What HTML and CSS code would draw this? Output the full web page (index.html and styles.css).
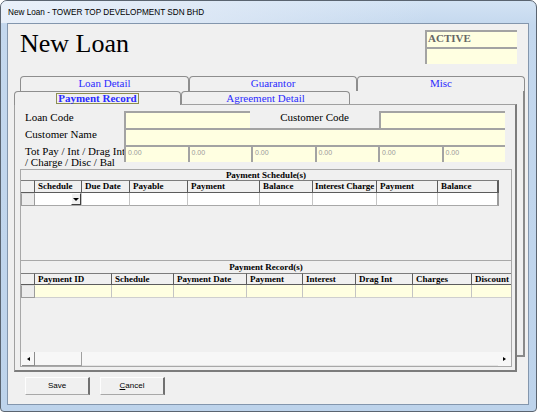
FILE: index.html
```html
<!DOCTYPE html>
<html>
<head>
<meta charset="utf-8">
<title>New Loan</title>
<link rel="stylesheet" href="styles.css">
</head>
<body>
<div class="window">
  <div class="titlebar">New Loan - TOWER TOP DEVELOPMENT SDN BHD</div>
  <div class="client">
    <div class="header">
      <h1 class="heading">New Loan</h1>
      <div class="status">
        <div class="field stat">ACTIVE</div>
        <div class="field stat"></div>
      </div>
    </div>

    <div class="tabctl">
      <div class="tabrow back">
        <div class="tab t-loan">Loan Detail</div>
        <div class="tab t-guar">Guarantor</div>
        <div class="tab t-misc">Misc</div>
      </div>
      <div class="backpanel">
        <div class="tabrow front">
          <div class="tab t-pay sel"><span class="focus">Payment Record</span></div>
          <div class="tab t-agree">Agreement Detail</div>
        </div>
        <div class="panel">
          <div class="frow">
            <div class="lbl">Loan Code</div>
            <div class="field w126"></div>
            <div class="lbl mid">Customer Code</div>
            <div class="field w126"></div>
          </div>
          <div class="frow">
            <div class="lbl">Customer Name</div>
            <div class="field w381"></div>
          </div>
          <div class="frow">
            <div class="lbl two">Tot Pay / Int / Drag Int<br>/ Charge / Disc / Bal</div>
            <div class="nums">
              <div class="field num">0.00</div>
              <div class="field num">0.00</div>
              <div class="field num">0.00</div>
              <div class="field num">0.00</div>
              <div class="field num">0.00</div>
              <div class="field num">0.00</div>
            </div>
          </div>

          <div class="grid g1">
            <div class="cap">Payment Schedule(s)</div>
            <div class="gr gr1 hrow">
              <div class="hc"></div>
              <div class="hc">Schedule</div>
              <div class="hc">Due Date</div>
              <div class="hc">Payable</div>
              <div class="hc">Payment</div>
              <div class="hc">Balance</div>
              <div class="hc tight">Interest Charge</div>
              <div class="hc">Payment</div>
              <div class="hc last">Balance</div>
            </div>
            <div class="gr gr1 drow">
              <div class="rhd"></div>
              <div class="dc dd"><span class="ddbtn"><i class="tri-d"></i></span></div>
              <div class="dc"></div>
              <div class="dc"></div>
              <div class="dc"></div>
              <div class="dc"></div>
              <div class="dc"></div>
              <div class="dc"></div>
              <div class="dc last"></div>
            </div>
            <div class="gspace"></div>
          </div>

          <div class="grid g2">
            <div class="cap">Payment Record(s)</div>
            <div class="gr gr2 hrow">
              <div class="hc"></div>
              <div class="hc">Payment ID</div>
              <div class="hc">Schedule</div>
              <div class="hc">Payment Date</div>
              <div class="hc">Payment</div>
              <div class="hc">Interest</div>
              <div class="hc">Drag Int</div>
              <div class="hc">Charges</div>
              <div class="hc">Discount</div>
            </div>
            <div class="gr gr2 drow">
              <div class="rhd"></div>
              <div class="dc"></div>
              <div class="dc"></div>
              <div class="dc"></div>
              <div class="dc"></div>
              <div class="dc"></div>
              <div class="dc"></div>
              <div class="dc"></div>
              <div class="dc"></div>
            </div>
            <div class="gspace"></div>
            <div class="sb">
              <div class="sbb"><i class="tri-l"></i></div>
              <div class="sbt"></div>
              <div class="sbtrack"></div>
              <div class="sbb r"><i class="tri-r"></i></div>
            </div>
          </div>
        </div>
      </div>
    </div>

    <div class="buttons">
      <button class="btn">Save</button>
      <button class="btn"><u>C</u>ancel</button>
    </div>
  </div>
</div>
</body>
</html>
```

FILE: styles.css
```css
* { box-sizing: border-box; }
html, body { margin: 0; padding: 0; background: #ffffff; }
body { width: 537px; height: 412px; overflow: hidden; font-family: "Liberation Serif", serif; }

.window {
  width: 537px; height: 412px;
  border: 1px solid #5a6470;
  border-radius: 7px 7px 4px 4px;
  background: linear-gradient(180deg, #d3e3f4 0, #c4d8ee 24px, #bdd3eb 100%);
  padding: 0 7px 6px 6px;
  display: flex; flex-direction: column;
  overflow: hidden;
}
.titlebar {
  height: 22px; flex: none;
  margin: 0 -7px 0 -6px; padding-left: 7px;
  font: 8.2px/23px "Liberation Sans", sans-serif;
  color: #000;
  white-space: nowrap;
  background: linear-gradient(90deg, rgba(236,242,250,0.9) 0, rgba(226,235,247,0.7) 40%, rgba(205,222,242,0) 80%);
}
.client {
  flex: 1;
  border: 1px solid #8396ad;
  background: #f0f0f0;
  display: flex; flex-direction: column;
}

.header {
  display: flex; justify-content: space-between; align-items: flex-start;
  height: 40px; flex: none;
  padding: 6px 11px 0 12px;
}
.heading { margin: 1px 0 0; font: normal 26px/26px "Liberation Serif", serif; color: #000; }
.status { width: 92px; }

.field {
  height: 17px;
  background: #ffffe1;
  border-top: 2px solid #a3a3a3;
  border-left: 2px solid #a3a3a3;
  flex: none;
}
.stat { font: bold 11px/12px "Liberation Serif", serif; color: #666; padding-left: 1px; }

.tabctl { margin: 12px 0 0 6px; width: 511px; flex: none; }
.tabrow { display: flex; align-items: flex-start; }
.tab {
  border: 1px solid #8e8e8e; border-bottom: none;
  border-radius: 4px 4px 0 0;
  background: #f0f0f0;
  font: 11px/13px "Liberation Serif", serif;
  color: #2b2bff;
  text-align: center;
  white-space: nowrap;
  flex: none;
}
.back { height: 15px; padding-left: 6px; }
.back .tab { height: 15px; }
.t-loan { width: 169px; }
.t-guar { width: 168px; }
.t-misc { width: 168px; }
.backpanel { border-right: 2px solid #8a8a8a; border-bottom: 2px solid #8a8a8a; padding-right: 6px; }
.front { height: 13px; }
.front .tab { height: 13px; }
.t-pay { width: 167px; }
.t-agree { width: 169px; }
.tab.sel { height: 14px; position: relative; z-index: 1; }
.focus {
  display: inline-block;
  font-weight: bold;
  line-height: 9px;
  padding: 0 1px;
  border: 1px solid #8d8d50;
}

.panel {
  width: 503px; height: 268px;
  margin-bottom: -17px;
  border-top: 1px solid #a0a0a0; border-left: 1px solid #a0a0a0;
  border-right: 2px solid #7c7c7c; border-bottom: 2px solid #7c7c7c;
  background: #f0f0f0;
  padding-top: 6px;
}
.frow { display: flex; align-items: flex-start; height: 17px; padding-left: 10px; }
.lbl {
  width: 99px; flex: none;
  font: 11px/13px "Liberation Serif", serif; color: #000;
  white-space: nowrap;
}
.lbl.mid { width: 129px; text-align: center; }
.lbl.two { line-height: 11px; padding-top: 1px; height: 17px; }
.w126 { width: 126px; }
.w381 { width: 381px; }
.nums { display: flex; width: 381px; flex: none; }
.num {
  flex: 1;
  font: 7px/11px "Liberation Sans", sans-serif;
  color: #9a9a9a;
  padding-left: 2px;
}

.grid {
  margin-left: 5px; width: 492px;
  border: 1px solid #a8a8a8;
  background: #f0f0f0;
  overflow: hidden;
  display: flex; flex-direction: column;
}
.g1 { margin-top: 7px; height: 92px; }
.g2 { height: 106px; border-top: none; }
.cap { text-align: center; font: bold 9px/10px "Liberation Serif", serif; color: #000; flex: none; }
.g1 .cap { height: 10px; }
.g2 .cap { height: 12px; line-height: 12px; }
.gr { display: grid; justify-content: start; flex: none; }
.gr1 { grid-template-columns: 14px 47px 48px 58px 72px 53px 64px 61px 61px; }
.gr2 { grid-template-columns: 14px 77px 62px 73px 56px 53px 57px 59px 60px; }
.g1 .hrow { height: 13px; }
.g2 .hrow { height: 12px; }
.hc {
  border-top: 1px solid #7c7c7c;
  border-bottom: 1px solid #5c5c5c;
  border-right: 1px solid #5c5c5c;
  padding-left: 3px;
  font: bold 9px/11px "Liberation Serif", serif;
  color: #000;
  white-space: nowrap; overflow: hidden;
}
.hc.tight { padding-left: 2px; letter-spacing: -0.1px; }
.g2 .hc { line-height: 10px; }
.hc.last { border-right-width: 2px; }
.drow { height: 13px; }
.dc { border-right: 1px solid #c4c4c4; border-bottom: 1px solid #a8a8a8; background: #ffffff; }
.g2 .dc { background: #ffffe1; border-bottom-color: #cfcfcf; }
.dc.last { border-right: 2px solid #9a9a9a; }
.rhd { background: #ececec; border: 1px solid #9c9c9c; border-top-color: #dcdcdc; }
.dd { display: flex; justify-content: flex-end; align-items: flex-end; }
.ddbtn {
  width: 10px; height: 12px;
  background: #f0f0f0;
  border: 1px solid; border-color: #ffffff #3f3f3f #3f3f3f #ffffff;
  display: flex; align-items: center; justify-content: center;
}
.tri-d { width: 0; height: 0; border-left: 3px solid transparent; border-right: 3px solid transparent; border-top: 3px solid #000; }
.gspace { flex: 1; }

.sb { display: flex; height: 14px; flex: none; background: #f7f7f7; padding-left: 1px; }
.sbb {
  width: 13px; flex: none;
  display: flex; align-items: center; justify-content: center;
  border-right: 1px solid #8c8c8c; border-bottom: 1px solid #8c8c8c;
}
.sbb.r { border: none; }
.sbt { width: 47px; flex: none; border-right: 1px solid #a0a0a0; border-bottom: 1px solid #a0a0a0; }
.sbtrack { flex: 1; border-bottom: 1px solid #e4e4e4; }
.tri-l { width: 0; height: 0; border-top: 2px solid transparent; border-bottom: 2px solid transparent; border-right: 3px solid #000; }
.tri-r { width: 0; height: 0; border-top: 2px solid transparent; border-bottom: 2px solid transparent; border-left: 3px solid #000; }

.buttons { display: flex; gap: 10px; padding-left: 17px; margin-top: 20px; flex: none; }
.btn {
  width: 65px; height: 18px;
  margin: 0; padding: 0;
  background: #f0f0f0;
  border-style: solid; border-width: 1px 2px 1px 1px;
  border-color: #fdfdfd #707070 #a8a8a8 #fdfdfd;
  font: 8px/16px "Liberation Sans", sans-serif;
  color: #000;
  text-align: center;
}
```
